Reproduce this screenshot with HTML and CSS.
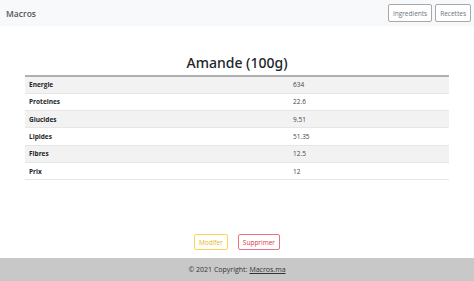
FILE: index.html
```html
<!DOCTYPE html>
<html lang="fr">
  <head>
    <meta charset="UTF-8" />
    <meta name="viewport" content="width=device-width, initial-scale=1.0" />
    <title>Macros</title>
    <link rel="stylesheet" href="styles.css">
  </head>
  <body>
    <nav class="navbar">
      <a class="brand" href="#">Macros</a>
      <div class="nav-buttons">
        <button class="btn btn-outline">Ingredients</button>
        <button class="btn btn-outline">Recettes</button>
      </div>
    </nav>
    <main class="content">
      <h1 class="title">Amande (100g)</h1>
      <table class="macros-table">
        <tbody>
          <tr><th>Energie</th><td>634</td></tr>
          <tr><th>Proteines</th><td>22.6</td></tr>
          <tr><th>Glucides</th><td>9.51</td></tr>
          <tr><th>Lipides</th><td>51.35</td></tr>
          <tr><th>Fibres</th><td>12.5</td></tr>
          <tr><th>Prix</th><td>12</td></tr>
        </tbody>
      </table>
      <div class="actions">
        <button class="btn btn-warning">Modifer</button>
        <button class="btn btn-danger">Supprimer</button>
      </div>
    </main>
    <footer class="footer">
      © 2021 Copyright: <a href="#">Macros.ma</a>
    </footer>
  </body>
</html>
```

FILE: styles.css
```css
* {
  box-sizing: border-box;
  margin: 0;
  padding: 0;
}
body {
  font-family: "Open Sans", "Noto Sans", sans-serif;
  color: #212529;
  background: #fff;
  height: 281px;
  display: flex;
  flex-direction: column;
}
.navbar {
  background-color: #f8f9fa;
  height: 26px;
  display: flex;
  align-items: center;
  justify-content: space-between;
  padding: 0 3px 0 6px;
}
.brand {
  font-size: 8.5px;
  font-weight: 600;
  color: #555;
  text-decoration: none;
}
.nav-buttons {
  display: flex;
  gap: 3px;
}
.btn {
  background: #fff;
  font-family: inherit;
  font-size: 6.5px;
  border-radius: 2px;
  height: 18px;
  padding: 0 4px;
  cursor: pointer;
}
.btn-outline {
  border: 1px solid #a8a8a8;
  color: #6c757d;
}
.content {
  flex: 1;
  padding: 0 25px;
}
.title {
  text-align: center;
  font-family: "Noto Sans", "Open Sans", sans-serif;
  font-size: 14px;
  font-weight: 500;
  margin-top: 25px;
  height: 24px;
  line-height: 24px;
}
.macros-table {
  width: 100%;
  border-collapse: collapse;
  border-top: 2px solid #b0b0b0;
  font-size: 6.5px;
}
.macros-table th,
.macros-table td {
  height: 17.3px;
  padding: 0 4px;
  text-align: left;
  vertical-align: middle;
  border-bottom: 1px solid #e6e6e6;
}
.macros-table th {
  width: 264px;
  font-weight: 700;
}
.macros-table td {
  color: #444;
}
.macros-table tr:nth-child(odd) {
  background-color: #f2f2f2;
}
.actions {
  display: flex;
  justify-content: center;
  gap: 10px;
  margin-top: 54px;
}
.actions .btn {
  height: 16px;
}
.btn-warning {
  border: 1px solid #ffd54f;
  color: #e8b51c;
}
.btn-danger {
  border: 1px solid #e57380;
  color: #d9364a;
}
.footer {
  background-color: #c8c8c8;
  height: 23px;
  display: flex;
  align-items: center;
  justify-content: center;
  font-size: 7px;
  color: #333;
}
.footer a {
  color: #333;
  margin-left: 2px;
}
```
